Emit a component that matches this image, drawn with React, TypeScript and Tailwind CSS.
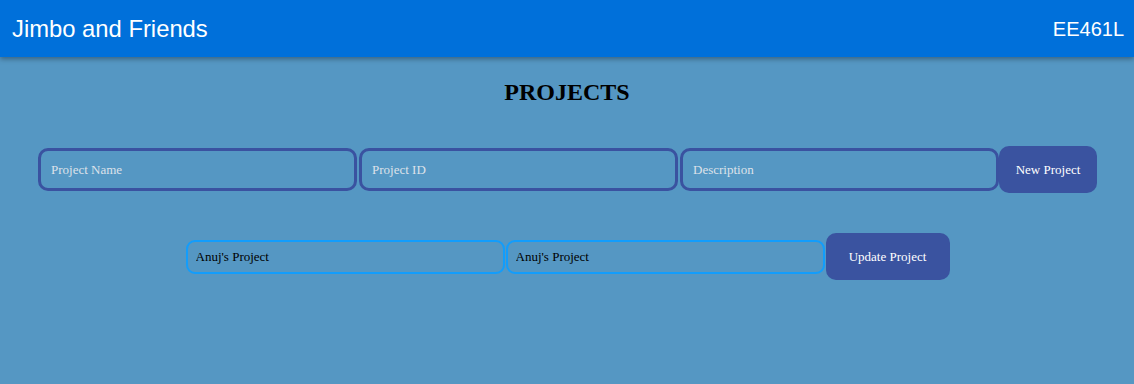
import React from "react";

export default function App() {
  const serif = { fontFamily: '"Liberation Serif", "Times New Roman", serif' };
  return (
    <div className="min-h-[384px] w-full bg-[#5597c3]" style={serif}>
      <header
        className="flex h-[57px] items-center justify-between bg-[#0070da] px-[12px] text-white shadow-[0_2px_5px_rgba(0,0,0,0.35)]"
        style={{ fontFamily: '"Liberation Sans", Arial, sans-serif' }}
      >
        <span className="text-[23.8px] leading-none">Jimbo and Friends</span>
        <span className="mr-[-2px] text-[20px] leading-none">EE461L</span>
      </header>
      <h2 className="mt-[21px] text-center text-[24px] font-bold leading-[28px] text-black">PROJECTS</h2>
      <div className="mt-[40px] flex items-center justify-center gap-[2px] pl-[1px]">
        <input
          placeholder="Project Name"
          className="h-[43px] w-[319px] rounded-[10px] border-[3px] border-[#3a52a0] bg-transparent px-[10px] text-[13px] text-black outline-none placeholder:text-[#dde2ea]"
        />
        <input
          placeholder="Project ID"
          className="h-[43px] w-[319px] rounded-[10px] border-[3px] border-[#3a52a0] bg-transparent px-[10px] text-[13px] text-black outline-none placeholder:text-[#dde2ea]"
        />
        <input
          placeholder="Description"
          className="h-[43px] w-[319px] rounded-[10px] border-[3px] border-[#3a52a0] bg-transparent px-[10px] text-[13px] text-black outline-none placeholder:text-[#dde2ea]"
        />
        <button className="ml-[-2px] h-[47px] w-[98px] rounded-[10px] bg-[#3a53a0] text-[13px] text-white">
          New Project
        </button>
      </div>
      <div className="mt-[40px] flex items-center justify-center gap-[1px] pl-[1px]">
        <input
          defaultValue="Anuj's Project"
          className="h-[34px] w-[319px] rounded-[9px] border-2 border-[#129dfc] bg-transparent px-[8px] text-[13px] text-black outline-none"
        />
        <input
          defaultValue="Anuj's Project"
          className="h-[34px] w-[319px] rounded-[9px] border-2 border-[#129dfc] bg-transparent px-[8px] text-[13px] text-black outline-none"
        />
        <button className="h-[47px] w-[124px] rounded-[10px] bg-[#3a53a0] text-[13px] text-white">
          Update Project
        </button>
      </div>
    </div>
  );
}
